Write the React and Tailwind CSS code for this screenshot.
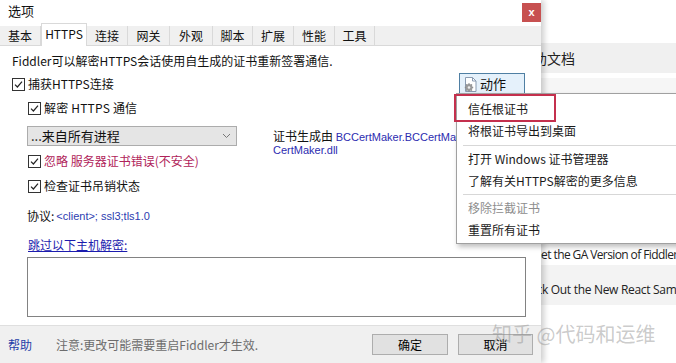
import React from "react";

const cjk = "font-['Noto_Sans_CJK_SC','Noto_Sans',sans-serif]";
const latin = "font-['Liberation_Sans','Noto_Sans_CJK_SC',sans-serif]";

function Check() {
  return (
    <span className="w-[13px] h-[13px] shrink-0 border border-[#333] bg-white flex items-center justify-center">
      <svg width="9" height="9" viewBox="0 0 9 9">
        <path d="M1 4.6 L3.4 7 L8 1.6" stroke="#222" strokeWidth="1.2" fill="none" />
      </svg>
    </span>
  );
}

function CheckRow({ children, className = "" }) {
  return (
    <div className={`flex items-center gap-[3px] h-[16px] ${className}`}>
      <Check />
      {children}
    </div>
  );
}

function GearDoc() {
  return (
    <svg width="17" height="17" viewBox="0 0 17 17">
      <path d="M3.5 1.5 H10.5 L14 5 V15.5 H3.5 Z" fill="#fff" stroke="#8a9bb0" />
      <path d="M10.5 1.5 V5 H14" fill="none" stroke="#8a9bb0" />
      <circle cx="7" cy="11.5" r="3.4" fill="#9a9a9a" />
      <circle cx="7" cy="11.5" r="1.3" fill="#eee" />
      <path d="M7 7.3 V8.4 M7 14.6 V15.7 M2.8 11.5 H3.9 M10.1 11.5 H11.2 M4 8.5 L4.8 9.3 M9.2 13.7 L10 14.5 M4 14.5 L4.8 13.7 M9.2 9.3 L10 8.5" stroke="#8a8a8a" strokeWidth="1.3" />
    </svg>
  );
}

const tabs = [
  { label: "基本", w: "w-[41px]" },
  { label: "HTTPS", w: "w-[46px]", active: true },
  { label: "连接", w: "w-[41px]" },
  { label: "网关", w: "w-[42px]" },
  { label: "外观", w: "w-[43px]" },
  { label: "脚本", w: "w-[40px]" },
  { label: "扩展", w: "w-[41px]" },
  { label: "性能", w: "w-[41px]" },
  { label: "工具", w: "w-[40px]" },
];

function MenuItem({ children, muted }) {
  return (
    <div className={`h-[22px] flex items-center px-[11px] text-[12px] ${muted ? "text-[#8d8d8d]" : "text-[#1a1a1a]"}`}>
      {children}
    </div>
  );
}

function Sep({ h }) {
  return (
    <div className={`${h} flex items-center pl-[6px]`}>
      <div className="h-px w-full bg-[#d7d7d7]" />
    </div>
  );
}

export default function App() {
  return (
    <div className={`w-[676px] h-[363px] relative overflow-hidden bg-white flex ${cjk}`}>
      {/* options dialog */}
      <div className="w-[541px] h-[363px] shrink-0 flex flex-col bg-white relative z-10 shadow-[3px_0_6px_rgba(0,0,0,0.2)]">
        <div className="h-[26px] flex items-start justify-between pl-[8px]">
          <span className="text-[13px] leading-[22px] text-[#111]">选项</span>
          <div className="w-[19px] h-[19px] mt-[3px] bg-[#c75050] flex items-center justify-center text-white text-[11px] font-bold leading-none font-['Liberation_Sans',sans-serif]">
            x
          </div>
        </div>

        <div className="h-[20px] flex items-end bg-[#f0f0f0] border-b border-[#d9d9d9]">
          {tabs.map((t) =>
            t.active ? (
              <div
                key={t.label}
                className={`${t.w} h-[23px] -mb-px bg-white border-x border-t border-[#d9d9d9] flex items-start justify-center pt-[3px] text-[12px] leading-[14px] text-[#111]`}
              >
                {t.label}
              </div>
            ) : (
              <div
                key={t.label}
                className={`${t.w} h-full border-r border-[#d9d9d9] flex items-center justify-center text-[12px] text-[#111]`}
              >
                {t.label}
              </div>
            )
          )}
          <div className="flex-1 h-full" />
        </div>

        <div className="flex-1 flex flex-col pl-[12px] pr-[16px] pt-[7px] text-[12px] text-[#111]">
          <div className="h-[16px] leading-[16px]">Fiddler可以解密HTTPS会话使用自生成的证书重新签署通信.</div>

          <div className="mt-[4px] h-[22px] flex items-center justify-between">
            <CheckRow>捕获HTTPS连接</CheckRow>
            <div className="w-[66px] h-[22px] bg-[#e5f1fb] border border-[#4f7fa3] flex items-center pl-[2px] gap-[1px] text-[13px]">
              <GearDoc />
              <span>动作</span>
            </div>
          </div>

          <CheckRow className="mt-[5px] ml-[16px]">
            <span className="tracking-[0.2px]">解密 HTTPS 通信</span>
          </CheckRow>

          <div className="mt-[10px] h-[20px] flex items-start ml-[15px]">
            <div className="w-[210px] h-[20px] shrink-0 bg-[#e5e5e5] border border-[#acacac] flex items-center justify-between pl-[3px] pr-[5px]">
              <span className="text-[13px]">...来自所有进程</span>
              <svg width="9" height="6" viewBox="0 0 9 6">
                <path d="M1 1 L4.5 4.5 L8 1" stroke="#777" fill="none" />
              </svg>
            </div>
            <div className="ml-[36px] mt-[3px] leading-[13px] whitespace-nowrap">
              <div>
                <span>证书生成由 </span>
                <span className={`${latin} text-[11px] text-[#2c2cb0]`}>BCCertMaker.BCCertMaker,</span>
              </div>
              <div className={`${latin} text-[11px] text-[#2c2cb0]`}>CertMaker.dll</div>
            </div>
          </div>

          <CheckRow className="mt-[7px] ml-[16px]">
            <span className="text-[#b0235a]">忽略 服务器证书错误(不安全)</span>
          </CheckRow>

          <CheckRow className="mt-[9px] ml-[16px]">检查证书吊销状态</CheckRow>

          <div className="mt-[14px] ml-[15px] h-[16px] flex items-center">
            <span>协议: </span>
            <span className={`${latin} text-[11px] text-[#2c3cb0] ml-[2px]`}>&lt;client&gt;; ssl3;tls1.0</span>
          </div>

          <div className="mt-[13px] ml-[16px] h-[16px] leading-[16px] text-[#1c1cae] underline">跳过以下主机解密:</div>

          <div className="mt-[4px] ml-[15px] w-[499px] h-[60px] border border-[#828282] bg-white" />
        </div>

        <div className="h-[38px] bg-[#f0f0f0] border-t border-[#dfdfdf] flex items-center pl-[8px] pr-[8px] text-[12px]">
          <span className="text-[#1f3ea8]">帮助</span>
          <span className="ml-[24px] text-[#6d6d6d]">注意:更改可能需要重启Fiddler才生效.</span>
          <div className="flex-1" />
          <div className="w-[76px] h-[21px] bg-[#e1e1e1] border border-[#adadad] flex items-center justify-center">确定</div>
          <div className="ml-[10px] w-[75px] h-[21px] bg-[#e1e1e1] border border-[#adadad] flex items-center justify-center">取消</div>
        </div>
      </div>

      {/* page behind the dialog */}
      <div className="flex-1 flex flex-col overflow-hidden">
        <div className="h-[43px]" />
        <div className="h-[30px] bg-[#f0f0f0] flex items-center text-[14px] text-[#222]">
          <span className="-ml-[22px] whitespace-nowrap">帮助文档</span>
        </div>
        <div className="h-[5px]" />
        <div className="h-[19px] bg-[#f6f6f6] border-b border-[#a8a8a8]" />
        <div className="h-[148px]" />
        <div className="h-[20px] flex items-center font-['Open_Sans',sans-serif] text-[12px] tracking-[-0.6px] text-[#222] whitespace-nowrap">
          <span className="-ml-[8px]">Get the GA Version of Fiddler</span>
        </div>
        <div className="h-[40px] bg-[#f3f3f3] pt-[16px] font-['Open_Sans',sans-serif] text-[12px] leading-[17px] tracking-[-0.3px] text-[#222] whitespace-nowrap">
          <span className="-ml-[18px]">heck Out the New React Samples</span>
        </div>
        <div className="flex-1" />
      </div>

      {/* action menu */}
      <div className="absolute left-[456px] top-[93px] w-[232px] z-20 bg-white border border-[#a0a0a0] shadow-[2px_3px_5px_rgba(0,0,0,0.25)] pt-[4px] pb-[2px]">
        <div className="absolute -left-[3px] top-0 w-[102px] h-[28px] border-2 border-[#c4304d]" />
        <MenuItem>信任根证书</MenuItem>
        <MenuItem>将根证书导出到桌面</MenuItem>
        <Sep h="h-[6px]" />
        <MenuItem>打开 Windows 证书管理器</MenuItem>
        <MenuItem>了解有关HTTPS解密的更多信息</MenuItem>
        <Sep h="h-[5px]" />
        <MenuItem muted>移除拦截证书</MenuItem>
        <MenuItem>重置所有证书</MenuItem>
      </div>

      {/* watermark */}
      <div className="absolute left-[492px] top-[320px] z-30 text-[20px] leading-[28px] text-[rgba(140,140,140,0.45)] whitespace-nowrap">
        知乎 @代码和运维
      </div>
    </div>
  );
}
